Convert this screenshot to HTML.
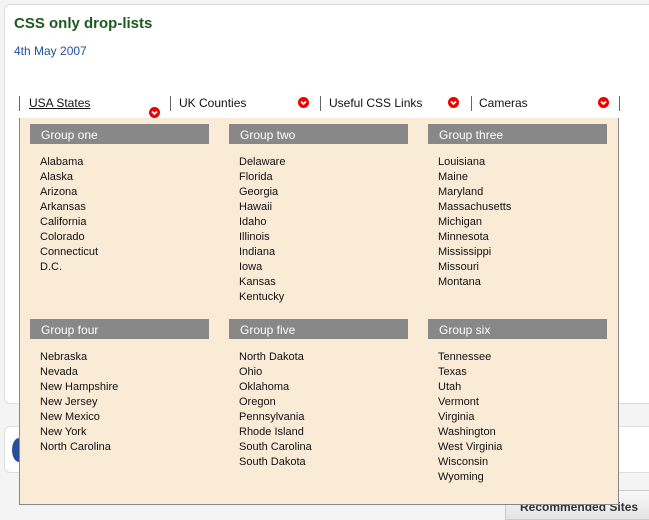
<!DOCTYPE html>
<html><head><meta charset="utf-8"><style>
*{margin:0;padding:0;box-sizing:border-box}
body{width:649px;height:518px;background:#f4f4f4;font-family:"Liberation Sans",Arial,sans-serif;position:relative;overflow:hidden}
.box1{position:absolute;left:4px;top:4px;width:660px;height:400px;background:#fff;border:1px solid #ddd;border-radius:6px}
.box2{position:absolute;left:4px;top:426px;width:660px;height:47px;background:#fff;border:1px solid #ddd;border-radius:6px}
.logo{position:absolute;left:12px;top:438px;width:14px;height:24px;border-radius:50%;background:#2a4d9a}
.tab{position:absolute;left:505px;top:490px;width:150px;height:30px;background:linear-gradient(#f8f8f8,#e4e4e4);border:1px solid #ccc;font-size:12px;font-weight:bold;color:#333;padding:9px 0 0 14px}
h1{position:absolute;left:14px;top:15px;font-size:15px;color:#1d5a1d;font-weight:bold}
.date{position:absolute;left:14px;top:44px;font-size:12px;color:#1e4f9c}
.sep{position:absolute;top:96px;width:1px;height:15px;background:#666}
.nav{position:absolute;top:96px;font-size:12px;color:#111}
.arr{position:absolute;width:11px;height:11px;border-radius:50%;background:#e00}
.arr svg{position:absolute;left:0;top:0}
.panel{position:absolute;left:19px;top:118px;width:600px;height:387px;background:#faebd7;border:1px solid #888;border-top:none}
.gh{position:absolute;width:179px;height:20px;background:#888;color:#fff;font-size:12px;padding:4px 0 0 11px}
.items{position:absolute;font-size:11px;line-height:15px;color:#111}
</style></head><body>
<div class="box1"></div>
<div class="box2"></div>
<div class="logo"></div>
<div class="tab">Recommended Sites</div>
<h1>CSS only drop-lists</h1>
<div class="date">4th May 2007</div>
<div class="sep" style="left:19px"></div>
<div class="sep" style="left:170px"></div>
<div class="sep" style="left:320px"></div>
<div class="sep" style="left:471px"></div>
<div class="sep" style="left:619px"></div>
<div class="nav" style="left:29px;text-decoration:underline">USA States</div>
<div class="nav" style="left:179px">UK Counties</div>
<div class="nav" style="left:329px">Useful CSS Links</div>
<div class="nav" style="left:479px">Cameras</div>
<div class="arr" style="left:149px;top:107px"><svg width="11" height="11"><path d="M3 4.5L5.5 7L8 4.5" stroke="#fff" stroke-width="1.8" fill="none"/></svg></div>
<div class="arr" style="left:298px;top:97px"><svg width="11" height="11"><path d="M3 4.5L5.5 7L8 4.5" stroke="#fff" stroke-width="1.8" fill="none"/></svg></div>
<div class="arr" style="left:448px;top:97px"><svg width="11" height="11"><path d="M3 4.5L5.5 7L8 4.5" stroke="#fff" stroke-width="1.8" fill="none"/></svg></div>
<div class="arr" style="left:598px;top:97px"><svg width="11" height="11"><path d="M3 4.5L5.5 7L8 4.5" stroke="#fff" stroke-width="1.8" fill="none"/></svg></div>
<div class="panel">
<div class="gh" style="left:10px;top:6px">Group one</div>
<div class="gh" style="left:209px;top:6px">Group two</div>
<div class="gh" style="left:408px;top:6px">Group three</div>
<div class="items" style="left:20px;top:37px">Alabama<br>Alaska<br>Arizona<br>Arkansas<br>California<br>Colorado<br>Connecticut<br>D.C.</div>
<div class="items" style="left:219px;top:37px">Delaware<br>Florida<br>Georgia<br>Hawaii<br>Idaho<br>Illinois<br>Indiana<br>Iowa<br>Kansas<br>Kentucky</div>
<div class="items" style="left:418px;top:37px">Louisiana<br>Maine<br>Maryland<br>Massachusetts<br>Michigan<br>Minnesota<br>Mississippi<br>Missouri<br>Montana</div>
<div class="gh" style="left:10px;top:201px">Group four</div>
<div class="gh" style="left:209px;top:201px">Group five</div>
<div class="gh" style="left:408px;top:201px">Group six</div>
<div class="items" style="left:20px;top:232px">Nebraska<br>Nevada<br>New Hampshire<br>New Jersey<br>New Mexico<br>New York<br>North Carolina</div>
<div class="items" style="left:219px;top:232px">North Dakota<br>Ohio<br>Oklahoma<br>Oregon<br>Pennsylvania<br>Rhode Island<br>South Carolina<br>South Dakota</div>
<div class="items" style="left:418px;top:232px">Tennessee<br>Texas<br>Utah<br>Vermont<br>Virginia<br>Washington<br>West Virginia<br>Wisconsin<br>Wyoming</div>
</div>
</body></html>
